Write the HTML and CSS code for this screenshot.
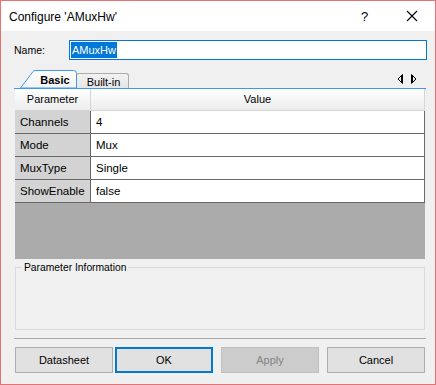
FILE: index.html
```html
<!DOCTYPE html>
<html>
<head>
<meta charset="utf-8">
<link rel="stylesheet" href="styles.css">
</head>
<body>
<div class="window">
  <div class="titlebar">
    <span class="title">Configure 'AMuxHw'</span>
    <span class="help">?</span>
    <svg class="close" width="12" height="12" viewBox="0 0 12 12"><path d="M1 1 L11 11 M11 1 L1 11" stroke="#000" stroke-width="1.1" fill="none"/></svg>
  </div>
  <div class="content">
    <div class="name-row">
      <span class="name-label">Name:</span>
      <div class="name-input"><span class="sel">AMuxHw</span></div>
    </div>
    <div class="tabstrip">
      <div class="tab tab-basic">
        <svg class="tab-shape" width="57" height="18" viewBox="0 0 57 18"><defs><linearGradient id="g1" x1="0" y1="0" x2="0" y2="1"><stop offset="0" stop-color="#ffffff"/><stop offset="1" stop-color="#f3f3f3"/></linearGradient></defs><path d="M0.5 18 L13 1.6 Q13.8 0.5 15 0.5 L53.5 0.5 Q56.5 0.5 56.5 3.5 L56.5 18 Z" fill="url(#g1)" stroke="#3c99f2" stroke-width="1"/><path d="M1 17.6 L56 17.6" stroke="url(#g1)" stroke-width="1.2"/></svg>
        <span class="tab-label bold">Basic</span>
      </div>
      <div class="tab tab-builtin"><span class="tab-label">Built-in</span></div>
      <div class="tab-arrows">
        <svg width="20" height="10" viewBox="0 0 20 10"><path d="M5.5 0.5 L5.5 9.5 L1 5 Z" fill="none" stroke="#000" stroke-width="1"/><path d="M4.5 1 L4.5 9" stroke="#000" stroke-width="1"/><path d="M14.5 0.5 L14.5 9.5 L19 5 Z" fill="none" stroke="#000" stroke-width="1"/><path d="M15.5 1 L15.5 9" stroke="#000" stroke-width="1"/></svg>
      </div>
    </div>
    <div class="panel">
      <div class="grid">
        <div class="grid-head">
          <div class="hcell hparam">Parameter</div>
          <div class="hcell hvalue">Value</div>
        </div>
        <div class="grow"><div class="pcell">Channels</div><div class="vcell">4</div></div>
        <div class="grow"><div class="pcell">Mode</div><div class="vcell">Mux</div></div>
        <div class="grow"><div class="pcell">MuxType</div><div class="vcell">Single</div></div>
        <div class="grow"><div class="pcell">ShowEnable</div><div class="vcell">false</div></div>
        <div class="grid-empty"></div>
      </div>
      <fieldset class="info">
        <legend>Parameter Information</legend>
      </fieldset>
    </div>
    <div class="buttons">
      <button class="btn">Datasheet</button>
      <button class="btn btn-ok">OK</button>
      <button class="btn btn-disabled" disabled>Apply</button>
      <button class="btn">Cancel</button>
    </div>
  </div>
</div>
</body>
</html>
```

FILE: styles.css
```css
* { box-sizing: border-box; }
html, body { margin: 0; padding: 0; }
body {
  font-family: "Liberation Sans", Arial, sans-serif;
  font-size: 11px;
  color: #000;
  background: #f0f0f0;
}
.window {
  width: 436px;
  height: 385px;
  border: 1px solid #e57373;
  background: #f0f0f0;
  display: flex;
  flex-direction: column;
}
.titlebar {
  height: 30px;
  background: #ffffff;
  display: flex;
  align-items: center;
  padding-left: 8px;
}
.title {
  font-size: 12px;
  flex: 1;
  padding-top: 1px;
}
.help {
  font-size: 13px;
  width: 12px;
  margin-right: 33px;
  padding-top: 1px;
}
.close {
  margin-right: 17px;
}
.content {
  flex: 1;
  display: flex;
  flex-direction: column;
}
.name-row {
  display: flex;
  align-items: center;
  margin-top: 9px;
  padding-left: 13px;
  height: 20px;
}
.name-label {
  width: 55px;
  font-size: 10.5px;
}
.name-input {
  width: 358px;
  height: 20px;
  border: 1px solid #0078d7;
  background: #fff;
  padding: 1px 0 0 1px;
}
.sel {
  display: inline-block;
  background: #0078d7;
  color: #fff;
  height: 16px;
  line-height: 16px;
  padding: 0 1px 0 1px;
}
.tabstrip {
  display: flex;
  align-items: flex-end;
  height: 18px;
  margin-top: 10px;
  padding-left: 19px;
  padding-right: 18px;
}
.tab {
  position: relative;
  height: 18px;
  display: flex;
  align-items: center;
  justify-content: center;
}
.tab-basic {
  width: 57px;
  padding-left: 13px;
  z-index: 2;
}
.tab-shape {
  position: absolute;
  left: 0;
  top: 0;
}
.tab-label {
  position: relative;
  line-height: 14px;
  padding-top: 2px;
}
.bold { font-weight: bold; }
.tab-builtin {
  width: 53px;
  height: 15px;
  margin-left: -1px;
  border: 1px solid #acacac;
  border-bottom: none;
  border-radius: 3px 3px 0 0;
  background: linear-gradient(#f2f2f2, #e6e6e6);
  padding-left: 2px;
}
.tab-builtin .tab-label { padding-top: 1px; }
.tab-arrows {
  margin-left: auto;
  height: 18px;
  display: flex;
  align-items: flex-start;
  padding-top: 4px;
}
.panel {
  margin-left: 13px;
  width: 412px;
  border-top: 1px solid #3c99f2;
  border-bottom: 1px solid #a9a9a9;
  padding: 0 1px 8px 1px;
  height: 251px;
}
.grid {
  width: 410px;
}
.grid-head {
  display: flex;
  height: 22px;
  border-bottom: 1px solid #d5d5d5;
  background: linear-gradient(#ffffff, #ececec);
}
.hcell {
  line-height: 21px;
  text-align: center;
}
.hparam {
  width: 76px;
  border-right: 1px solid #d5d5d5;
}
.hvalue {
  flex: 1;
  border-right: 1px solid #d5d5d5;
}
.grow {
  display: flex;
  height: 23px;
  border-bottom: 1px solid #696969;
  font-size: 11.5px;
}
.pcell {
  width: 76px;
  background: #d3d3d3;
  border-right: 1px solid #696969;
  line-height: 22px;
  padding-left: 5px;
}
.vcell {
  flex: 1;
  background: #fff;
  border-right: 1px solid #696969;
  line-height: 22px;
  padding-left: 5px;
}
.grid-empty {
  height: 56px;
  background: #ababab;
}
.info {
  margin: 2px 0 0 0;
  padding: 0;
  width: 410px;
  height: 69px;
  border: 1px solid #dadada;
}
.info legend {
  margin-left: 6px;
  padding: 0 2px;
  line-height: 13px;
  font-size: 10.3px;
}
.buttons {
  display: flex;
  margin-top: 8px;
  padding-left: 14px;
}
.btn {
  font-family: "Liberation Sans", Arial, sans-serif;
  font-size: 11px;
  color: #000;
  width: 98px;
  height: 26px;
  background: #e1e1e1;
  border: 1px solid #adadad;
  padding: 0;
  margin: 0;
}
.btn-ok {
  margin-left: 2px;
  border: 2px solid #0078d7;
}
.btn-disabled {
  margin-left: 8px;
  background: #cccccc;
  border-color: #bfbfbf;
  color: #838383;
}
.btn-disabled + .btn {
  margin-left: 8px;
}
```
